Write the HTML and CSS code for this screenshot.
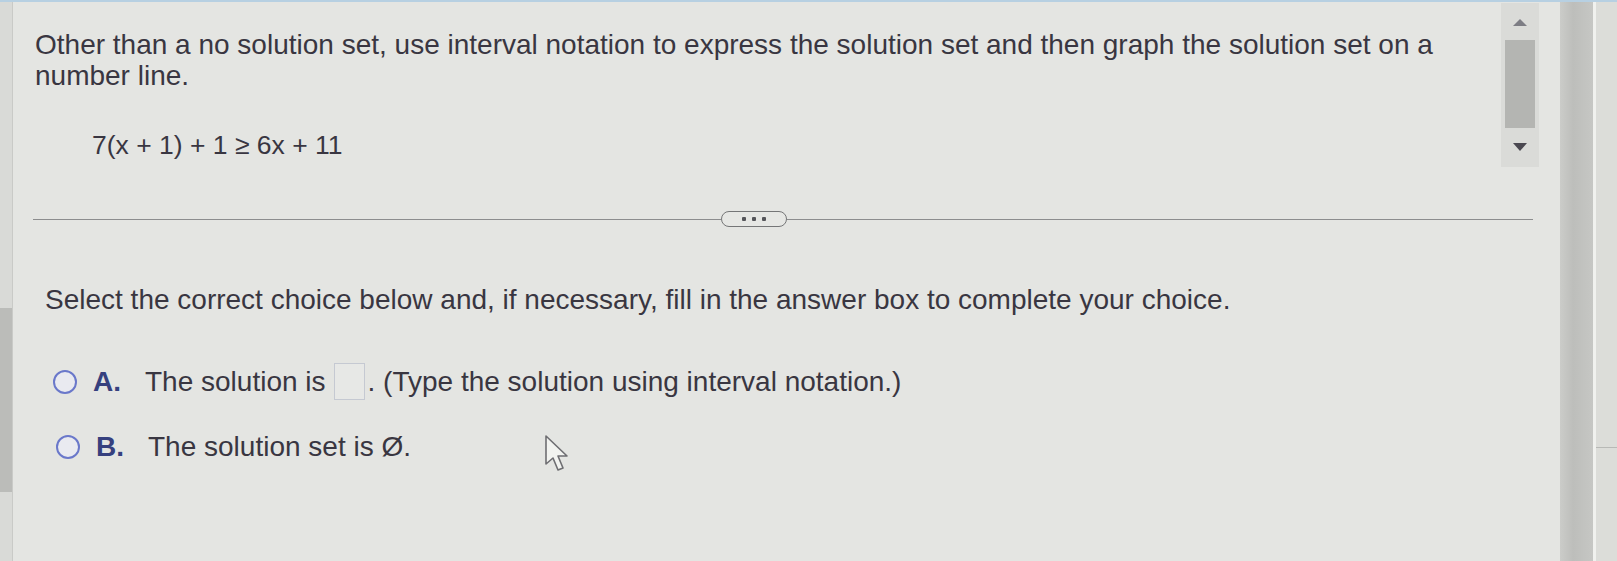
FILE: index.html
```html
<!DOCTYPE html>
<html>
<head>
<meta charset="utf-8">
<link rel="stylesheet" href="styles.css">
</head>
<body>
<div class="screen">
  <div class="rail"><div class="rail-bar"></div></div>
  <div class="main">
    <div class="question-row">
      <div class="question">
        <p class="prompt">Other than a no solution set, use interval notation to express the solution set and then graph the solution set on a number line.</p>
        <p class="equation">7(x + 1) + 1 ≥ 6x + 11</p>
      </div>
      <div class="scrollbar">
        <div class="arrow up"></div>
        <div class="thumb"></div>
        <div class="arrow down"></div>
      </div>
    </div>
    <div class="separator">
      <div class="sep-line first"></div>
      <div class="sep-pill"><span></span><span></span><span></span></div>
      <div class="sep-line"></div>
    </div>
    <div class="answers">
      <p class="instruction">Select the correct choice below and, if necessary, fill in the answer box to complete your choice.</p>
      <div class="choice choice-a">
        <span class="radio"></span>
        <span class="letter">A.</span>
        <span class="choice-text">The solution is<span class="answer-box"></span>. (Type the solution using interval notation.)</span>
      </div>
      <div class="choice choice-b">
        <span class="radio"></span>
        <span class="letter">B.</span>
        <span class="choice-text">The solution set is Ø.</span>
      </div>
    </div>
    <svg class="cursor" width="28" height="40" viewBox="0 0 28 40">
      <path d="M2 2 L2 30 L9 24 L14 36 L19 34 L14 22 L23 22 Z" fill="#f2f3f0" stroke="#6e6e72" stroke-width="1.6" stroke-linejoin="round"/>
    </svg>
  </div>
  <div class="edge-band"></div>
  <div class="edge-line"></div>
  <div class="edge-right"><div class="edge-rule"></div></div>
</div>
</body>
</html>
```

FILE: styles.css
```css
html, body {
  margin: 0;
  padding: 0;
  background: #e3e4e1;
}
.screen {
  display: flex;
  width: 1617px;
  height: 561px;
  border-top: 2px solid #b7d0e2;
  box-sizing: border-box;
  font-family: "Liberation Sans", Arial, sans-serif;
  color: #393641;
  overflow: hidden;
}
.rail {
  width: 13px;
  flex: none;
  background: #d9dad7;
  border-right: 1px solid #c9cac7;
  padding-top: 306px;
  box-sizing: border-box;
}
.rail-bar {
  height: 184px;
  background: #bbbcb9;
}
.main {
  width: 1547px;
  flex: none;
  position: relative;
  background: #e4e5e2;
}
.question-row {
  display: flex;
  height: 207px;
}
.question {
  width: 1466px;
  flex: none;
  padding-left: 22px;
  padding-top: 27px;
  box-sizing: border-box;
}
.prompt {
  margin: 0;
  font-size: 28px;
  line-height: 31px;
  width: 1440px;
}
.equation {
  margin: 39px 0 0 57px;
  font-size: 26.5px;
  line-height: 31px;
}
.scrollbar {
  margin-left: 22px;
  width: 38px;
  height: 164px;
  margin-top: 1px;
  background: #dadbd8;
  display: flex;
  flex-direction: column;
  align-items: center;
}
.arrow {
  width: 0;
  height: 0;
  border-left: 7px solid transparent;
  border-right: 7px solid transparent;
}
.arrow.up {
  margin-top: 16px;
  border-bottom: 7px solid #7d7d84;
}
.thumb {
  width: 30px;
  height: 88px;
  margin-top: 14px;
  background: #b4b5b2;
}
.arrow.down {
  margin-top: 15px;
  border-top: 8px solid #4a4850;
}
.separator {
  display: flex;
  align-items: center;
  margin-left: 20px;
  width: 1500px;
  height: 20px;
}
.sep-line {
  flex: 1;
  height: 1px;
  background: #8c8d8e;
}
.sep-line.first {
  flex: none;
  width: 688px;
}
.sep-pill {
  width: 64px;
  height: 14px;
  border: 1.5px solid #757677;
  border-radius: 9px;
  display: flex;
  align-items: center;
  justify-content: center;
  gap: 6px;
  background: #e6e7e4;
}
.sep-pill span {
  width: 4px;
  height: 4px;
  background: #55565a;
  border-radius: 1px;
}
.answers {
  padding-left: 32px;
  padding-top: 55px;
}
.instruction {
  margin: 0;
  font-size: 28px;
  line-height: 31px;
}
.choice {
  display: flex;
  align-items: center;
  font-size: 28px;
}
.choice-a {
  margin-top: 48px;
  margin-left: 8px;
  height: 37px;
}
.choice-b {
  margin-top: 31px;
  margin-left: 11px;
  height: 32px;
}
.radio {
  width: 20px;
  height: 20px;
  border: 2.5px solid #6a78ca;
  border-radius: 50%;
  background: #e9eaf0;
  flex: none;
}
.letter {
  font-weight: bold;
  color: #36407e;
  margin-left: 16px;
  width: 52px;
  flex: none;
}
.choice-text {
  display: flex;
  align-items: center;
  white-space: pre;
}
.answer-box {
  display: inline-block;
  width: 29px;
  height: 35px;
  border: 1px solid #c5c9d2;
  background: #e7e8e6;
  margin: 0 3px 0 8px;
}
.cursor {
  position: absolute;
  left: 531px;
  top: 432px;
}
.edge-band {
  width: 33px;
  flex: none;
  background: linear-gradient(90deg, #cbccc9, #bdbebb 40%, #c6c7c4);
}
.edge-line {
  width: 3px;
  flex: none;
  background: #f0f1ee;
}
.edge-right {
  flex: 1;
  background: #dcddd9;
  padding-top: 445px;
  box-sizing: border-box;
}
.edge-rule {
  height: 1px;
  background: #b8b9b6;
}
```
